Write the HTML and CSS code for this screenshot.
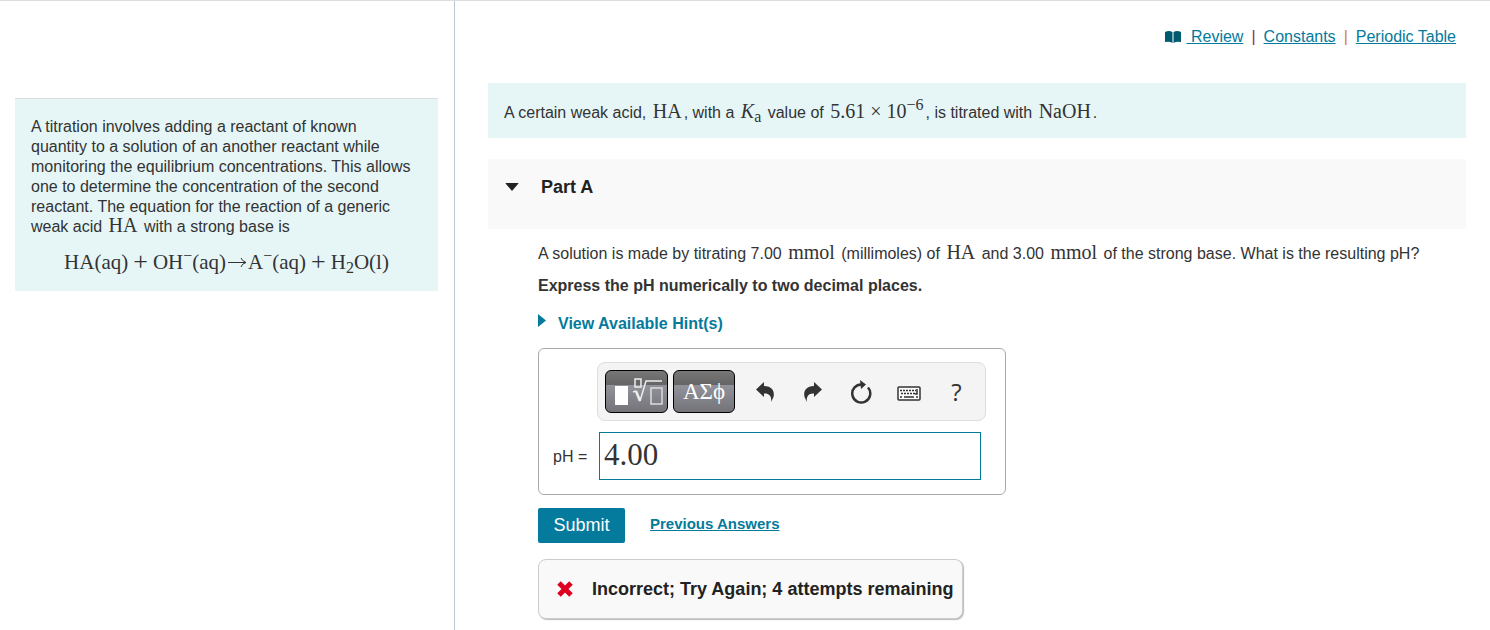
FILE: index.html
```html
<!DOCTYPE html>
<html lang="en">
<head>
    <meta charset="UTF-8">
    <meta name="viewport" content="width=device-width, initial-scale=1.0">
    <title>Part A - Weak Acid Titration</title>

    <link rel="stylesheet" href="styles.css">
</head>
<body>

    <div class="page">
        <!-- Introduction -->
        <aside class="sidebar">
            <div class="intro">
                <p>A titration involves adding a reactant of known quantity to a solution of an another reactant while monitoring the equilibrium concentrations. This allows one to determine the concentration of the second reactant. The equation for the reaction of a generic weak acid <span class="math">HA</span> with a strong base is</p>
                <div class="equation">
                    <span>HA(aq)</span><span class="op">+</span><span>OH<sup>−</sup>(aq)</span><svg class="arrow" width="20" height="12" viewBox="0 0 20 12"><path d="M1 6.500h18M14 2q1 3 5 4.500q-4 1-5 4.500" fill="none" stroke="#333" stroke-width="1"/></svg><span>A<sup>−</sup>(aq)</span><span class="op">+</span><span>H<sub>2</sub>O(l)</span>
                </div>
            </div>
        </aside>

        <main class="main">
            <nav class="links">
                <svg class="book" width="16" height="12" viewBox="0 0 16 12"><path d="M0 1q4-2 7.500 0v11q-3-2-7.500-1zM8.500 1q3.500-2 7.500 0v10q-4.500-1-7.500 1z" fill="#005a70"/></svg>
                <a href="#">&nbsp;Review</a>
                <span class="sep red">|</span>
                <a href="#">Constants</a>
                <span class="sep orange">|</span>
                <a href="#">Periodic Table</a>
            </nav>

            <div class="problem">A certain weak acid, <span class="math">HA</span>, with a <span class="math"><i>K</i><sub>a</sub></span> value of <span class="math">5.61 × 10<sup>−6</sup></span>, is titrated with <span class="math">NaOH</span>.</div>

            <button class="part" type="button">
                <svg width="14" height="8" viewBox="0 0 14 8"><path d="M1 0h12q1 0 0 1L7 8L1 1q-1-1 0-1z" fill="#222"/></svg>
                Part A
            </button>

            <!-- Question -->
            <form class="question">
                <p>A solution is made by titrating 7.00 <span class="math">mmol</span> (millimoles) of <span class="math">HA</span> and 3.00 <span class="math">mmol</span> of the strong base. What is the resulting pH?</p>
                <p class="express">Express the pH numerically to two decimal places.</p>
                <a class="hints" href="#">
                    <svg width="8" height="13" viewBox="0 0 8 13"><path d="M0 0l8 6.500l-8 6.500z" fill="#047a9c"/></svg>
                    View Available Hint(s)
                </a>

                <div class="answer-box">
                    <div class="toolbar">
                        <button class="tool-dark" type="button" aria-label="Templates">
                            <svg width="61" height="41" viewBox="0 0 61 41">
                                <rect x="9" y="15" width="13" height="19" fill="#fff"/>
                                <g fill="none" stroke="#eee">
                                    <rect x="29" y="8" width="6" height="8" stroke-width="1.500"/>
                                    <path d="M27 21l3-1" stroke-width="1.500"/>
                                    <path d="M30 20l4 10" stroke-width="2.500"/>
                                    <path d="M34 30L40 10h16" stroke-width="1.500"/>
                                    <rect x="45" y="17" width="11" height="16" stroke="#ddd" stroke-width="1.500"/>
                                </g>
                            </svg>
                        </button>
                        <button class="tool-dark greek" type="button">ΑΣϕ</button>
                        <button class="tool" type="button" aria-label="Undo">
                            <svg width="20" height="20" viewBox="0 0 20 20"><path d="M1 7.500L9 0v4c7 0 11 4 9.500 11l-2.500 5c1-6-2-9-7-8.500v3.500z" fill="#333"/></svg>
                        </button>
                        <button class="tool" type="button" aria-label="Redo">
                            <svg width="20" height="20" viewBox="0 0 20 20"><path d="M19 7.500L11 0v4c-7 0-11 4-9.500 11l2.500 5c-1-6 2-9 7-8.500v3.500z" fill="#333"/></svg>
                        </button>
                        <button class="tool" type="button" aria-label="Reset">
                            <svg width="22" height="24" viewBox="0 0 22 24"><path d="M12 4.500A9 9 0 1 0 18 7.500" fill="none" stroke="#333" stroke-width="2.500"/><path d="M10 0l6 4.500l-5 4.500z" fill="#333"/></svg>
                        </button>
                        <button class="tool keyboard" type="button" aria-label="Keyboard shortcuts">
                            <svg width="24" height="15" viewBox="0 0 24 15">
                                <rect x="1" y="1" width="22" height="13" rx="1" fill="#fff" stroke="#333" stroke-width="1.500"/>
                                <path d="M3 4.500h16M4 7.500h14" stroke="#333" stroke-width="1.500" stroke-dasharray="2 1"/>
                                <path d="M20 3v5h-2M3 11h2M7 11h10M19 11h2" fill="none" stroke="#333" stroke-width="1.500"/>
                            </svg>
                        </button>
                        <button class="tool" type="button" aria-label="Help">?</button>
                    </div>
                    <div class="field">
                        <label for="ph">pH =</label>
                        <input type="text" id="ph" value="4.00">
                    </div>
                </div>

                <div class="actions">
                    <button class="submit" type="button">Submit</button>
                    <a href="#">Previous Answers</a>
                </div>

                <div class="feedback">
                    <svg width="18" height="18" viewBox="0 0 18 18"><path d="M3 3l12 12M15 3l-12 12" stroke="#dd0020" stroke-width="5"/></svg>
                    Incorrect; Try Again; 4 attempts remaining
                </div>
            </form>
        </main>
    </div>

</body>
</html>
```
FILE: styles.css
```css
/* General Styles */
* {
    box-sizing: border-box;
}

body {
    font-family: "Liberation Sans", Arial, sans-serif;
    font-size: 16px;
    line-height: 20px;
    margin: 0;
    background: #fff;
    color: #333;
}

p {
    margin: 0;
}

a {
    color: #047a9c;
}

button {
    font-family: inherit;
    border: none;
    cursor: pointer;
}

svg {
    flex: none;
}

.page {
    display: grid;
    grid-template-columns: 455px 1fr;
    min-height: 100vh;
    border-top: 1px solid #ddd;
}

/* Math */
.math, .equation {
    font-family: "Liberation Serif", "Times New Roman", serif;
}

.math {
    margin: 0 2px;
    font-size: 20px;
    line-height: 0;
}

sup, sub {
    font-size: 16px;
    line-height: 0;
}

sub {
    vertical-align: -4px;
}

/* Sidebar */
.sidebar {
    border-right: 1px solid #b8c8d6;
    padding: 97px 16px 0 15px;
}

.intro {
    background: #e6f6f7;
    border-top: 1px solid #ddd;
    padding: 18px 16px;
}

.intro p {
    padding-right: 6px;
}

.equation {
    display: flex;
    align-items: center;
    justify-content: center;
    margin-top: 14px;
    font-size: 21px;
    line-height: 22px;
}

.equation .op {
    margin: 0 5px;
    font-size: 26px;
}

.equation .arrow {
    margin: 0 1px;
}

/* Main column */
.main {
    padding: 26px 24px 10px 33px;
}

.links {
    display: flex;
    align-items: center;
    justify-content: flex-end;
    padding-right: 10px;
}

.links .book {
    margin-right: 6px;
}

.links .sep {
    margin: 0 8px;
}

.red {
    color: #9e1b4c;
}

.orange {
    color: #d98324;
}

.problem {
    margin-top: 36px;
    padding: 20px 16px 15px;
    background: #e6f6f7;
}

.part {
    display: flex;
    align-items: center;
    gap: 22px;
    width: 100%;
    margin-top: 21px;
    padding: 18px 17px 32px;
    background: #f9f9f9;
    color: #222;
    font-size: 18px;
    font-weight: bold;
    line-height: 20px;
}

/* Question */
.question {
    padding: 15px 0 0 50px;
}

.express {
    margin-top: 12px;
    font-weight: bold;
}

.hints {
    display: flex;
    width: fit-content;
    gap: 12px;
    margin-top: 18px;
    font-weight: bold;
    text-decoration: none;
}

.answer-box {
    width: 468px;
    margin-top: 14px;
    padding: 13px 19px 14px 14px;
    border: 1px solid #aaa;
    border-radius: 6px;
}

.toolbar {
    display: flex;
    align-items: center;
    gap: 5px;
    height: 59px;
    margin-left: 44px;
    padding: 0 7px;
    background: #f4f4f4;
    border: 1px solid #ddd;
    border-radius: 8px;
}

.tool-dark {
    width: 63px;
    height: 43px;
    padding: 0;
    border: 1px solid #000;
    border-radius: 6px;
    background: linear-gradient(#777 0, #646464 35%, #92929c 35%, #737378 100%);
    color: #fff;
}

.tool-dark svg {
    display: block;
}

.greek {
    width: 62px;
    margin-right: 3px;
    font-family: "Liberation Serif", serif;
    font-size: 23px;
}

.tool {
    display: flex;
    align-items: center;
    justify-content: center;
    width: 43px;
    height: 43px;
    padding: 0;
    background: none;
    color: #333;
    font-family: "Open Sans", sans-serif;
    font-size: 24px;
}

.keyboard {
    padding-top: 4px;
}

.field {
    display: flex;
    align-items: center;
    margin-top: 11px;
}

.field label {
    flex: 1;
    padding-top: 2px;
}

.field input {
    width: 382px;
    height: 48px;
    margin-right: 5px;
    padding: 0 4px 2px;
    border: 1px solid #047a9c;
    color: #333;
    font-family: "Liberation Serif", serif;
    font-size: 31px;
}

.actions {
    display: flex;
    gap: 25px;
    margin-top: 13px;
}

.actions a {
    padding-top: 6px;
    font-size: 15px;
    font-weight: bold;
}

.submit {
    width: 87px;
    height: 35px;
    padding: 0;
    border-radius: 2px;
    background: #047a9c;
    color: #fff;
    font-size: 18px;
}

.feedback {
    display: flex;
    align-items: center;
    gap: 18px;
    width: fit-content;
    height: 60px;
    margin-top: 16px;
    padding: 0 9px 0 17px;
    background: #f9f9f9;
    border: 1px solid #ccc;
    border-radius: 8px;
    box-shadow: 1px 1px 1px #bbb;
    color: #222;
    font-size: 18px;
    font-weight: bold;
}
```
